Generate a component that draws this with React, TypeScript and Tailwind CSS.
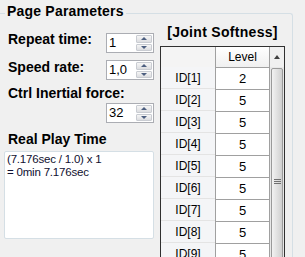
import React from "react";

const ids = [
  { id: "ID[1]", level: 2 },
  { id: "ID[2]", level: 5 },
  { id: "ID[3]", level: 5 },
  { id: "ID[4]", level: 5 },
  { id: "ID[5]", level: 5 },
  { id: "ID[6]", level: 5 },
  { id: "ID[7]", level: 5 },
  { id: "ID[8]", level: 5 },
  { id: "ID[9]", level: 5 },
];

function Spinner({ value }: { value: string }) {
  return (
    <div className="flex h-[20px] w-[48px] border border-[#abadb3] bg-white">
      <span className="flex-1 pl-[2px] text-[13px] leading-[18px] text-black">{value}</span>
      <div className="flex w-[17px] flex-col gap-[1px] py-[1px] pr-[1px]">
        <div className="flex flex-1 items-center justify-center rounded-[1px] border border-[#c9ccd2] bg-gradient-to-b from-[#f6f6f6] to-[#dcdde0]">
          <div className="h-0 w-0 border-x-[3px] border-b-[3px] border-x-transparent border-b-[#4d5f80]" />
        </div>
        <div className="flex flex-1 items-center justify-center rounded-[1px] border border-[#c9ccd2] bg-gradient-to-b from-[#f6f6f6] to-[#dcdde0]">
          <div className="h-0 w-0 border-x-[3px] border-t-[3px] border-x-transparent border-t-[#4d5f80]" />
        </div>
      </div>
    </div>
  );
}

export default function App() {
  return (
    <div
      className="h-[257px] w-[305px] overflow-hidden bg-[#f0f0f0] pt-[13px]"
      style={{ fontFamily: '"Liberation Sans", Arial, sans-serif' }}
    >
      {/* Page Parameters group */}
      <div className="relative h-[260px] w-[293px] rounded-tr-[3px] border-t border-r border-[#d5dfe5]">
        <span className="absolute top-[-11px] left-[5px] bg-[#f0f0f0] px-[2px] text-[14px] leading-[16px] font-bold tracking-[0.2px] text-black">
          Page Parameters
        </span>

        <div className="flex">
          {/* left column */}
          <div className="flex w-[154px] flex-col pt-[17px] pl-[8px]">
            <div className="flex h-[22px] items-start justify-between">
              <span className="text-[14px] leading-[16px] font-bold text-black">Repeat time:</span>
              <div className="mt-[2px]">
                <Spinner value="1" />
              </div>
            </div>
            <div className="mt-[6px] flex h-[21px] items-start justify-between">
              <span className="text-[14px] leading-[16px] font-bold text-black">Speed rate:</span>
              <div className="mt-[1px]">
                <Spinner value="1,0" />
              </div>
            </div>
            <span className="mt-[5px] text-[14px] leading-[16px] font-bold text-black">
              Ctrl Inertial force:
            </span>
            <div className="mt-[2px] flex justify-end">
              <Spinner value="32" />
            </div>
            <span className="mt-[8px] text-[14px] leading-[16px] font-bold text-black">
              Real Play Time
            </span>
            <div className="mt-[4px] -ml-[4px] h-[88px] rounded-[2px] border border-[#d5dfe5] bg-white px-[2px] pt-[1px] text-[11.5px] leading-[13px] tracking-[-0.2px] text-[#101030]">
              <div>(7.176sec / 1.0) x 1</div>
              <div>= 0min 7.176sec</div>
            </div>
          </div>

          {/* right column */}
          <div className="ml-[6px] flex w-[125px] flex-col">
            <span className="mt-[10px] text-center text-[14px] leading-[16px] font-bold tracking-[0.3px] text-black">
              [Joint Softness]
            </span>
            <div className="mt-[6px] flex border border-[#303030]">
              <div className="flex w-[108px] flex-col">
                <div className="flex h-[20px]">
                  <div className="w-[54px] bg-[#f4f4f4]" />
                  <div className="flex w-[54px] items-center justify-center border-l border-[#a0a0a0] bg-gradient-to-b from-white to-[#f0f0f0] text-[12px] text-black">
                    Level
                  </div>
                </div>
                {ids.map((r) => (
                  <div key={r.id} className="flex h-[22px]">
                    <div className="flex w-[54px] items-center justify-center border-b border-[#e4e4e4] bg-[#f4f5f7] text-[12px] text-black">
                      {r.id}
                    </div>
                    <div className="flex w-[54px] items-center justify-center border-t border-l border-[#a0a0a0] bg-white text-[13px] text-black">
                      {r.level}
                    </div>
                  </div>
                ))}
              </div>
              {/* scrollbar */}
              <div className="flex w-[15px] flex-col border-l border-[#a0a0a0] bg-[#e8e8e8]">
                <div className="flex h-[20px] items-center justify-center bg-[#f0f0f0]">
                  <div className="h-0 w-0 border-x-[3px] border-b-[4px] border-x-transparent border-b-[#404040]" />
                </div>
                <div className="mx-[1px] mt-[1px] flex h-[226px] items-center justify-center rounded-[2px] border border-[#9a9a9a] bg-gradient-to-r from-[#f2f2f2] to-[#d0d0d0]">
                  <div className="flex w-[7px] flex-col gap-[1px]">
                    <div className="h-[1px] bg-[#707070]" />
                    <div className="h-[1px] bg-[#707070]" />
                    <div className="h-[1px] bg-[#707070]" />
                  </div>
                </div>
              </div>
            </div>
          </div>
        </div>
      </div>
    </div>
  );
}
